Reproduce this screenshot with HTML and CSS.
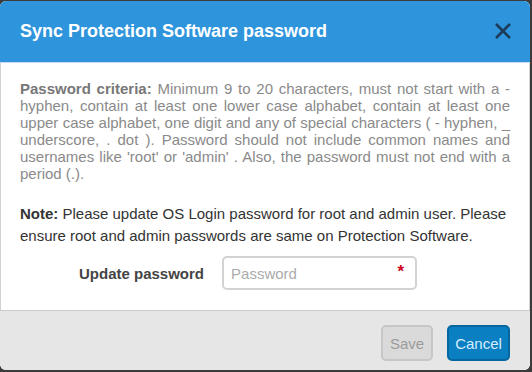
FILE: index.html
```html
<!DOCTYPE html>
<html>
<head>
<meta charset="utf-8">
<link rel="stylesheet" href="styles.css">
</head>
<body>
<div class="dialog">
  <div class="header">
    <h2 class="title">Sync Protection Software password</h2>
    <svg class="close" width="18" height="18" viewBox="0 0 18 18"><path d="M2 2 L16 16 M16 2 L2 16" stroke="#1c3b58" stroke-width="2.6" stroke-linecap="butt"/></svg>
  </div>
  <div class="body">
    <p class="criteria"><b>Password criteria:</b> Minimum 9 to 20 characters, must not start with a - hyphen, contain at least one lower case alphabet, contain at least one upper case alphabet, one digit and any of special characters ( - hyphen, _ underscore, . dot ). Password should not include common names and usernames like 'root' or 'admin' . Also, the password must not end with a period (.).</p>
    <p class="note"><b>Note:</b> Please update OS Login password for root and admin user. Please ensure root and admin passwords are same on Protection Software.</p>
    <div class="row">
      <label class="label">Update password</label>
      <div class="field">
        <input class="input" type="password" placeholder="Password">
        <span class="req">*</span>
      </div>
    </div>
  </div>
  <div class="footer">
    <button class="btn save" disabled>Save</button>
    <button class="btn cancel">Cancel</button>
  </div>
</div>
</body>
</html>
```
FILE: styles.css
```css
html, body {
  margin: 0;
  padding: 0;
  background: #3b3b3b;
  font-family: "Liberation Sans", Arial, sans-serif;
}
.dialog {
  margin: 1px 2px 0 0;
  height: 369px;
  border-radius: 6px;
  overflow: hidden;
  background: #fff;
  display: flex;
  flex-direction: column;
}
.header {
  height: 61px;
  flex: none;
  background: #2e95dc;
  border-bottom: 1px solid #c6ddef;
  display: flex;
  align-items: center;
  justify-content: space-between;
  padding: 0 18px 0 20px;
}
.title {
  margin: 0;
  color: #fff;
  font-size: 18px;
  font-weight: bold;
}
.close {
  display: block;
  margin-top: -1px;
}
.body {
  padding: 17px 20px 20px 20px;
  border-left: 1px solid #d2d2d2;
  border-right: 1px solid #d2d2d2;
}
.criteria {
  margin: 0 -1px 0 -1px;
  font-size: 15px;
  line-height: 17px;
  color: #8a8a8a;
  text-align: justify;
}
.criteria b {
  color: #777;
}
.note {
  margin: 21px -1px 0 -1px;
  font-size: 15px;
  line-height: 22px;
  color: #333;
}
.row {
  margin-top: 9px;
  display: flex;
  align-items: center;
  padding-left: 58px;
  gap: 18px;
}
.label {
  font-size: 15px;
  font-weight: bold;
  color: #444;
}
.field {
  width: 191px;
  height: 30px;
  border: 2px solid #d3d3d3;
  border-radius: 5px;
  display: flex;
  align-items: center;
}
.input {
  flex: 1;
  min-width: 0;
  border: none;
  outline: none;
  background: transparent;
  padding: 0 0 0 7px;
  font-family: "Liberation Sans", Arial, sans-serif;
  font-size: 15px;
  color: #333;
}
.input::placeholder {
  color: #ababab;
}
.req {
  color: #d0021b;
  font-size: 17px;
  font-weight: bold;
  margin-right: 11px;
  margin-top: -3px;
}
.footer {
  flex: 1;
  background: #e6e6e6;
  border-top: 1px solid #cbcbcb;
  display: flex;
  justify-content: flex-end;
  align-items: flex-start;
  gap: 14px;
  padding: 14px 20px 0 20px;
}
.btn {
  height: 36px;
  border-radius: 5px;
  font-family: "Liberation Sans", Arial, sans-serif;
  font-size: 15px;
  padding: 0;
}
.save {
  width: 52px;
  background: #dadada;
  border: 2px solid #c6c6c6;
  color: #9a9a9a;
}
.cancel {
  width: 63px;
  background: #0a7fc1;
  border: 2px solid #06679f;
  color: #d6edff;
}
```
